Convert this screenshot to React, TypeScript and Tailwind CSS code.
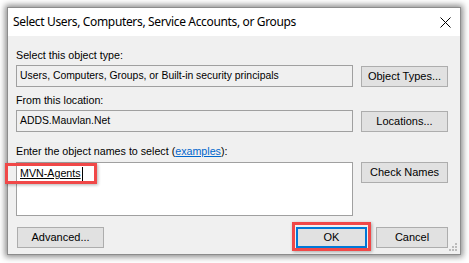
import React from 'react'

const body = { fontFamily: '"Liberation Sans", Arial, sans-serif' }
const title = { fontFamily: '"Noto Sans", "Open Sans", sans-serif' }

function Button({ label, className = '' }: { label: string; className?: string }) {
  return (
    <div
      className={`flex items-center justify-center border border-[#adadad] bg-[#e1e1e1] text-[11px] text-black ${className}`}
    >
      {label}
    </div>
  )
}

export default function App() {
  return (
    <div className="w-[469px] h-[263px] bg-white p-[7px]" style={body}>
      <div className="relative w-[454px] h-[248px] flex flex-col border border-[#8c8c8c] shadow-[0_0_6px_2px_rgba(0,0,0,0.45)] bg-[#f0f0f0]">
        {/* title bar */}
        <div className="h-[28px] bg-white flex items-center justify-between pl-[5px] pr-[9px]">
          <span className="text-[12px] tracking-[-0.35px] text-black leading-none" style={title}>
            Select Users, Computers, Service Accounts, or Groups
          </span>
          <svg width="11" height="11" viewBox="0 0 11 11">
            <path d="M0.5 0.5L10.5 10.5M10.5 0.5L0.5 10.5" stroke="#000" strokeWidth="1" />
          </svg>
        </div>

        <div className="flex-1 flex flex-col pl-[8px] pr-[12px] pt-[12px]">
          <div className="text-[10.7px] leading-[14px] text-black">Select this object type:</div>
          <div className="flex justify-between mt-[3px]">
            <div className="w-[337px] h-[22px] border border-[#a0a0a0] bg-[#f0f0f0] flex items-center pl-[3px] text-[10.4px] text-black">
              Users, Computers, Groups, or Built-in security principals
            </div>
            <Button label="Object Types..." className="w-[87px] h-[21px] mt-[1px]" />
          </div>

          <div className="text-[10.7px] leading-[14px] text-black mt-[6px]">From this location:</div>
          <div className="flex justify-between mt-[3px]">
            <div className="w-[337px] h-[22px] border border-[#a0a0a0] bg-[#f0f0f0] flex items-center pl-[3px] text-[10.4px] text-black">
              ADDS.Mauvlan.Net
            </div>
            <Button label="Locations..." className="w-[87px] h-[21px] mt-[1px]" />
          </div>

          <div className="text-[10.7px] leading-[14px] text-black mt-[12px]">
            Enter the object names to select (
            <span className="text-[#0066cc] underline">examples</span>):
          </div>
          <div className="flex justify-between mt-[4px]">
            <div className="w-[337px] h-[54px] border border-[#a0a0a0] bg-white pl-[3px] pt-[2px] text-[10.7px] text-black">
              <span className="inline-flex items-center leading-[15px]">
                <span className="underline">MVN-Agents</span>
                <span className="w-px h-[14px] bg-black ml-[1px]" />
              </span>
            </div>
            <Button label="Check Names" className="w-[87px] h-[21px]" />
          </div>

          <div className="flex justify-between items-center mt-[11px]">
            <Button label="Advanced..." className="w-[87px] h-[21px] ml-[1px]" />
            <div className="flex gap-[9px]">
              <div className="w-[71px] h-[21px] border-2 border-[#0078d7] bg-[#e1e1e1] flex items-center justify-center text-[11px] text-black">
                OK
              </div>
              <Button label="Cancel" className="w-[72px] h-[21px]" />
            </div>
          </div>
        </div>

        {/* size grip */}
        <svg className="absolute right-[2px] bottom-[2px]" width="9" height="9" viewBox="0 0 9 9">
          <rect x="6" y="0" width="2" height="2" fill="#bcbcbc" />
          <rect x="3" y="3" width="2" height="2" fill="#bcbcbc" />
          <rect x="6" y="3" width="2" height="2" fill="#bcbcbc" />
          <rect x="0" y="6" width="2" height="2" fill="#bcbcbc" />
          <rect x="3" y="6" width="2" height="2" fill="#bcbcbc" />
          <rect x="6" y="6" width="2" height="2" fill="#bcbcbc" />
        </svg>

        {/* annotation boxes */}
        <div className="absolute left-[-3px] top-[155px] w-[92px] h-[21px] border-[3px] border-[#f04848] shadow-[1px_1px_3px_rgba(0,0,0,0.3)]" />
        <div className="absolute left-[284px] top-[214px] w-[79px] h-[29px] border-[3px] border-[#f04848] shadow-[1px_1px_3px_rgba(0,0,0,0.3)]" />
      </div>
    </div>
  )
}
